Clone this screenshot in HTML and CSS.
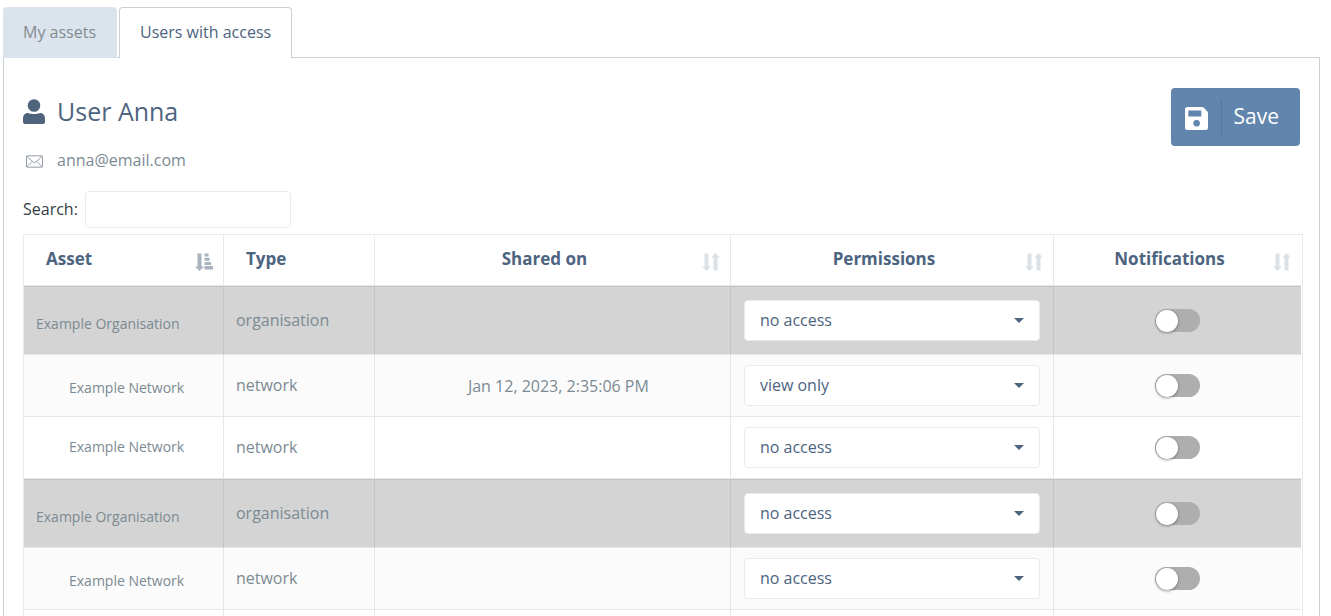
FILE: index.html
```html
<!DOCTYPE html>
<html lang="en">
<head>
<meta charset="utf-8">
<title>Users with access</title>
<link rel="stylesheet" href="styles.css">
</head>
<body>
<svg class="symbols" aria-hidden="true">
  <symbol id="sort-both" viewBox="0 0 18 18"><path d="M2.500 0.500h4v13h2.500l-4.500 4.500-4.500-4.500h2.500zM11.500 17.500h4v-13h2.500l-4.500-4.500-4.500 4.500h2.500z"/></symbol>
  <symbol id="sort-asc" viewBox="0 0 18 18"><path d="M2.500 0.500h4v13h2.500l-4.500 4.500-4.500-4.500h2.500zM9.500 0.500h4v3h-4zM9.500 4.700h5v3h-5zM9.500 8.900h6.500v3h-6.500zM9.500 13.100h8.500v3.400h-8.500z"/></symbol>
</svg>
<nav class="tabs" role="tablist">
  <button class="tab" role="tab" aria-selected="false">My assets</button>
  <button class="tab tab-active" role="tab" aria-selected="true">Users with access</button>
</nav>
<main class="panel">
  <header class="user-bar">
    <div class="user">
      <h1 class="user-name">
        <svg class="user-icon" viewBox="0 0 22 25" aria-hidden="true"><circle cx="11" cy="6.500" r="6.300"/><path d="M5 14C8 15.300 14 15.300 17 14 20.500 14 22 16.500 22 20v3q0 2-2 2H2q-2 0-2-2v-3C0 16.500 1.500 14 5 14z"/></svg>
        User Anna
      </h1>
      <p class="user-email">
        <svg class="mail-icon" viewBox="0 0 18 13" aria-hidden="true"><path d="M1 .5h16q.5 0 .5.500v11q0 .5-.5.500H1q-.5 0-.5-.5V1Q.5.500 1 .5zM1 1l6.500 6q1.500 1.300 3 0L17 1M1 12l5.500-5.500M17 12l-5.500-5.500"/></svg>
        anna@email.com
      </p>
    </div>
    <button class="save">
      <span class="save-icon"><svg viewBox="0 0 23 23" aria-hidden="true"><path fill-rule="evenodd" d="M2.500 0H17q1 0 1.800.8L22.200 4.200Q23 5 23 6v14.500Q23 23 20.500 23h-18Q0 23 0 20.500v-18Q0 0 2.500 0zM3.300 3.600v6h13v-6zM11.600 12.800a3.400 3.400 0 1 0 .01 0z"/></svg></span>
      <span class="save-label">Save</span>
    </button>
  </header>
  <div class="search">
    <label for="search">Search:</label>
    <input id="search" type="search">
  </div>
  <div class="table-frame">
    <table class="assets">
      <colgroup><col class="col-asset"><col class="col-type"><col class="col-shared"><col class="col-permissions"><col class="col-notifications"></colgroup>
      <thead>
        <tr>
          <th class="left"><button class="sort"><span>Asset</span><svg class="sorted" aria-hidden="true"><use href="#sort-asc"/></svg></button></th>
          <th class="left"><div class="sort"><span>Type</span></div></th>
          <th><button class="sort"><span>Shared on</span><svg aria-hidden="true"><use href="#sort-both"/></svg></button></th>
          <th><button class="sort"><span>Permissions</span><svg aria-hidden="true"><use href="#sort-both"/></svg></button></th>
          <th><button class="sort"><span>Notifications</span><svg aria-hidden="true"><use href="#sort-both"/></svg></button></th>
        </tr>
      </thead>
      <tbody>
        <tr class="organisation">
          <td class="asset">Example Organisation</td><td>organisation</td><td class="date"></td>
          <td class="permission"><div class="picker"><select aria-label="Permissions"><option>no access</option><option>view only</option></select></div></td>
          <td class="notify"><input class="switch" type="checkbox" role="switch" aria-label="Notifications"></td>
        </tr>
        <tr class="network">
          <td class="asset">Example Network</td><td>network</td><td class="date">Jan 12, 2023, 2:35:06 PM</td>
          <td class="permission"><div class="picker"><select aria-label="Permissions"><option>no access</option><option selected>view only</option></select></div></td>
          <td class="notify"><input class="switch" type="checkbox" role="switch" aria-label="Notifications"></td>
        </tr>
        <tr class="network">
          <td class="asset">Example Network</td><td>network</td><td class="date"></td>
          <td class="permission"><div class="picker"><select aria-label="Permissions"><option>no access</option><option>view only</option></select></div></td>
          <td class="notify"><input class="switch" type="checkbox" role="switch" aria-label="Notifications"></td>
        </tr>
        <tr class="organisation">
          <td class="asset">Example Organisation</td><td>organisation</td><td class="date"></td>
          <td class="permission"><div class="picker"><select aria-label="Permissions"><option>no access</option><option>view only</option></select></div></td>
          <td class="notify"><input class="switch" type="checkbox" role="switch" aria-label="Notifications"></td>
        </tr>
        <tr class="network">
          <td class="asset">Example Network</td><td>network</td><td class="date"></td>
          <td class="permission"><div class="picker"><select aria-label="Permissions"><option>no access</option><option>view only</option></select></div></td>
          <td class="notify"><input class="switch" type="checkbox" role="switch" aria-label="Notifications"></td>
        </tr>
        <tr class="spacer"><td></td><td></td><td></td><td></td><td></td></tr>
      </tbody>
    </table>
  </div>
</main>
</body>
</html>
```
FILE: styles.css
```css
* { box-sizing: border-box; }

body {
  display: flex;
  flex-direction: column;
  margin: 0;
  padding: 7px 11px 0 3px;
  height: 100vh;
  overflow: hidden;
  background: #fff;
  color: #7b8a93;
  font: 16px/24px "Open Sans", "Noto Sans", sans-serif;
}

button, input, select { font: inherit; color: inherit; }
.symbols { display: none; }

.tabs {
  display: flex;
  flex: none;
  gap: 2px;
  position: relative;
  z-index: 1;
}

.tab {
  height: 51px;
  padding: 0 21px 2px 20px;
  border: 0;
  border-radius: 4px 4px 0 0;
  background: #dbe3ec;
  color: #838b91;
}

.tab-active {
  padding: 0 20px 2px;
  border: 1px solid #cbcfd1;
  border-bottom: 0;
  background: #fff;
  color: #4d6480;
}

.panel {
  flex: 1;
  min-height: 0;
  margin-top: -1px;
  padding: 30px 16px 0 19px;
  border: 1px solid #c8d0d1;
  border-bottom: 0;
}

.user-bar {
  display: flex;
  justify-content: space-between;
  align-items: flex-start;
  padding-right: 3px;
}

.user-name, .user-email {
  display: flex;
  align-items: center;
  margin: 0;
  line-height: 48px;
}

.user-name {
  gap: 12px;
  margin-bottom: 2px;
  color: #4d6480;
  font-size: 25px;
  font-weight: 400;
  line-height: 46px;
}

.user-icon { width: 22px; height: 25px; fill: #4d647c; }
.user-email { gap: 14px; padding-left: 3px; }
.mail-icon { width: 17px; height: 13px; margin-top: 2px; fill: none; stroke: #8b95a0; }

.save {
  display: flex;
  align-items: center;
  height: 58px;
  padding: 0 21px 0 14px;
  border: 0;
  border-radius: 4px;
  background: #6285ad;
  color: #fff;
  font-size: 21px;
}

.save-icon {
  display: flex;
  align-items: center;
  height: 36px;
  padding-right: 13px;
  border-right: 1px solid #5475a0;
}

.save-icon svg { width: 23px; height: 23px; margin-top: 3px; fill: #fff; }
.save-label { padding: 0 0 2px 12px; }

.search {
  display: flex;
  align-items: center;
  gap: 7px;
  margin: 7px 0 6px;
  color: #333c42;
}

.search label { padding-bottom: 2px; }

.search input {
  appearance: none;
  width: 206px;
  height: 37px;
  padding: 0 12px;
  border: 1px solid #e8ebeb;
  border-radius: 4px;
  background: #fff;
}

.table-frame {
  padding: 1px 1px 0 0;
  border: 1px solid #e8ebeb;
}

.assets {
  width: 100%;
  table-layout: fixed;
  border-collapse: separate;
  border-spacing: 0;
}

.col-asset { width: 15.66%; }
.col-type { width: 11.82%; }
.col-shared { width: 27.88%; }
.col-permissions { width: 25.3%; }
.col-notifications { width: 19.34%; }

th, td {
  border: 0 solid #e7e7e7;
  border-width: 0 1px 1px 0;
}

th:last-child, td:last-child { border-right: 0; }
th { padding: 0; color: #4d6480; font-size: 17px; font-weight: 700; }

.sort {
  display: flex;
  align-items: center;
  width: 100%;
  height: 49px;
  padding: 0 10px 2px 12px;
  border: 0;
  background: none;
}

.sort span { flex: 1; padding-bottom: 2px; }
.left .sort { padding-left: 22px; text-align: left; }
.sort svg { width: 18px; height: 18px; margin-top: 4px; fill: #dce1e6; }
.sort .sorted { fill: #a9b3c0; }

td { padding: 10px 12px 12px; text-align: left; }
.network td { height: 62px; }
.network:nth-child(3n + 2) td { background: #fbfbfb; }

.organisation td {
  padding: 13px 12px 15px;
  border-top: 1px solid #c4c4c4;
  border-right-color: #c4c4c4;
  background: #d4d4d4;
}

tbody .asset { padding-top: 22px; font-size: 14px; }
.network .asset { padding-top: 17px; padding-left: 45px; }
.network + .network .asset { padding-top: 10px; }

td.date { padding: 10px 0 10px 12px; text-align: center; }
.organisation .permission { padding: 13px; }
.network .permission { padding: 10px 13px; }
.organisation .notify { padding: 13px 12px; }
.network .notify { padding: 10px 12px; }

.picker { position: relative; }

.picker select {
  display: block;
  appearance: none;
  width: 100%;
  height: 41px;
  padding: 0 36px 2px 15px;
  border: 1px solid #e8ebeb;
  border-radius: 4px;
  background: #fff;
  color: #4d6480;
}

.picker::after {
  content: "";
  position: absolute;
  top: 18px;
  right: 16px;
  border: 5px solid transparent;
  border-top-color: #4d6480;
  border-bottom: 0;
  pointer-events: none;
}

.switch {
  appearance: none;
  display: block;
  width: 45px;
  height: 23px;
  margin: 0 auto;
  padding: 1px;
  border-radius: 12px;
  background: #aeaeae;
}

.switch::before {
  content: "";
  display: block;
  width: 22px;
  height: 22px;
  border-radius: 50%;
  background: #fff;
  box-shadow: 0 1px 3px rgba(0, 0, 0, 0.4);
}

.switch:checked { background: #6285ad; }
.switch:checked::before { margin-left: auto; }
```
